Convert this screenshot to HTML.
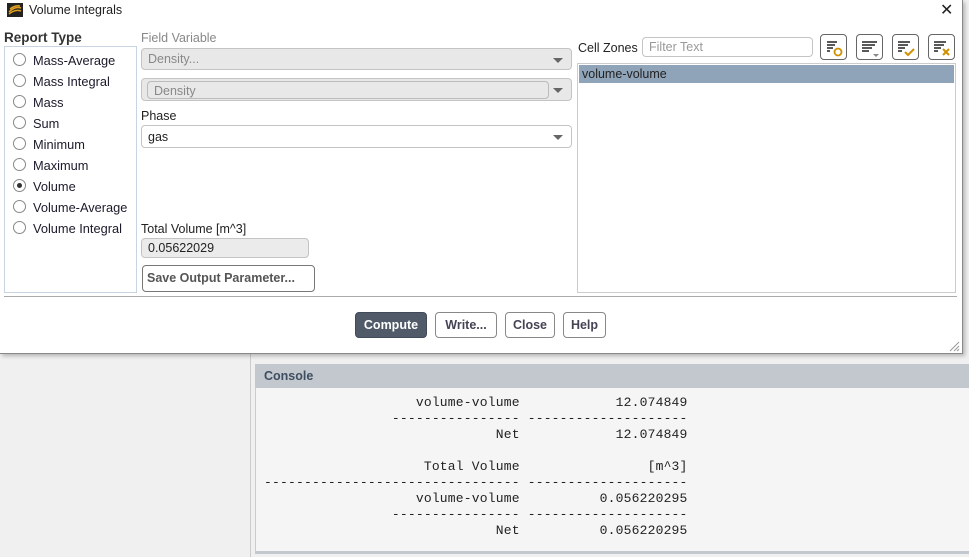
<!DOCTYPE html><html><head><style>
*{margin:0;padding:0;box-sizing:border-box}
body{width:969px;height:557px;position:relative;overflow:hidden;background:#f0f0f0;font-family:"Liberation Sans",sans-serif;font-size:12.5px;color:#222}
.a{position:absolute}
.dlg{left:0;top:0;width:963px;height:354px;background:#fff;border-right:1px solid #888;border-bottom:1px solid #888;box-shadow:2px 2px 4px rgba(0,0,0,.25)}
.radio{position:absolute;left:13px;width:13px;height:13px;border:1px solid #888;border-radius:50%;background:#fff}
.rl{position:absolute;left:33px;font-size:12.8px;color:#1a1a2a}
.combo{position:absolute;border:1px solid #c4c4c4;border-radius:4px;background:#e8e8e8}
.arr{position:absolute;right:8px;top:9px;width:0;height:0;border-left:5px solid transparent;border-right:5px solid transparent;border-top:5px solid #666}
.btn{position:absolute;top:312px;height:26px;border:1px solid #888;border-radius:4px;background:#fff;font-weight:bold;font-size:12.5px;color:#445;text-align:center;line-height:24px;font-family:"Liberation Sans Narrow","Liberation Sans",sans-serif}
.ib{position:absolute;top:34px;width:27px;height:26px;border:1px solid #666;border-radius:4px;background:#fff}
pre{font-family:"Liberation Mono",monospace;font-size:13px;letter-spacing:0.19px;line-height:16px;color:#222}
</style></head><body>
<div class="a" style="left:250px;top:354px;width:1px;height:203px;background:#ccc"></div>
<div class="a" style="left:255px;top:364px;width:714px;height:24px;background:#c3c7ce;color:#3e4e60;font-weight:bold;font-size:12.5px;padding:5px 9px">Console</div>
<div class="a" style="left:255px;top:388px;width:714px;height:166px;background:#f5f5f5;border-left:1px solid #ccc;border-bottom:3px solid #c3c7ce"></div>
<pre class="a" style="left:264px;top:395px">                   volume-volume            12.074849
                ---------------- --------------------
                             Net            12.074849

                    Total Volume                [m^3]
-------------------------------- --------------------
                   volume-volume          0.056220295
                ---------------- --------------------
                             Net          0.056220295</pre>
<div class="a dlg">
<svg class="a" style="left:7px;top:3px" width="16" height="14" viewBox="0 0 16 14"><rect width="16" height="14" fill="#222"/><path d="M2 9 Q8 3 14 5 M2 11 Q8 6 14 8 M3 6 Q8 2 13 3" stroke="#e0a020" stroke-width="1.5" fill="none"/></svg>
<div class="a" style="left:29px;top:3px;font-size:12.5px">Volume Integrals</div>
<div class="a" style="left:940px;top:0px;font-size:16px">✕</div>
<div class="a" style="left:4px;top:30px;font-weight:bold;font-size:13.5px;color:#333">Report Type</div>
<div class="a" style="left:4px;top:46px;width:133px;height:247px;border:1px solid #c8d4e2"></div>
<div class="radio" style="top:53px"></div><div class="rl" style="top:53px">Mass-Average</div>
<div class="radio" style="top:74px"></div><div class="rl" style="top:74px">Mass Integral</div>
<div class="radio" style="top:95px"></div><div class="rl" style="top:95px">Mass</div>
<div class="radio" style="top:116px"></div><div class="rl" style="top:116px">Sum</div>
<div class="radio" style="top:137px"></div><div class="rl" style="top:137px">Minimum</div>
<div class="radio" style="top:158px"></div><div class="rl" style="top:158px">Maximum</div>
<div class="radio" style="top:179px"><div style="position:absolute;left:3px;top:3px;width:5px;height:5px;border-radius:50%;background:#333"></div></div><div class="rl" style="top:179px">Volume</div>
<div class="radio" style="top:200px"></div><div class="rl" style="top:200px">Volume-Average</div>
<div class="radio" style="top:221px"></div><div class="rl" style="top:221px">Volume Integral</div>
<div class="a" style="left:141px;top:31px;color:#888;font-size:12.5px">Field Variable</div>
<div class="combo" style="left:141px;top:48px;width:431px;height:22px;color:#888;padding:3px 6px">Density...<div class="arr"></div></div>
<div class="combo" style="left:141px;top:78px;width:431px;height:23px"><div style="position:absolute;left:5px;top:2px;width:402px;height:18px;border:1px solid #bbb;border-radius:4px;color:#888;padding:2px 6px">Density</div><div class="arr"></div></div>
<div class="a" style="left:141px;top:109px;font-size:12.5px">Phase</div>
<div class="combo" style="left:141px;top:125px;width:431px;height:23px;background:#fff;padding:4px 6px">gas<div class="arr"></div></div>
<div class="a" style="left:141px;top:222px;font-size:12.5px">Total Volume [m^3]</div>
<div class="a" style="left:141px;top:238px;width:168px;height:20px;border:1px solid #c4c4c4;border-radius:4px;background:#ebebeb;padding:2px 6px">0.05622029</div>
<div class="a" style="left:142px;top:265px;width:173px;height:27px;border:1px solid #777;border-radius:4px;font-weight:bold;color:#555;font-size:12.5px;line-height:25px;padding-left:4px;white-space:nowrap">Save Output Parameter...</div>
<div class="a" style="left:578px;top:41px;font-size:12.5px">Cell Zones</div>
<div class="a" style="left:642px;top:37px;width:171px;height:20px;border:1px solid #c4c4c4;border-radius:4px;color:#999;padding:2px 6px">Filter Text</div>
<div class="ib" style="left:820px"><svg width="25" height="24"><path d="M6 7h10M6 10h8M6 13h6M6 16h3" stroke="#222" stroke-width="1.6"/><circle cx="17" cy="17" r="3.5" stroke="#d09000" stroke-width="1.8" fill="none"/></svg></div>
<div class="ib" style="left:856px"><svg width="25" height="24"><path d="M5 7h15M5 10h13M5 13h10M5 16h7" stroke="#222" stroke-width="1.6"/><path d="M16 19l3 3 3-3z" fill="#888"/></svg></div>
<div class="ib" style="left:892px"><svg width="25" height="24"><path d="M5 7h12M5 10h10M5 13h7M5 16h4" stroke="#222" stroke-width="1.6"/><path d="M12 17l3 3 6-6" stroke="#d09000" stroke-width="2" fill="none"/></svg></div>
<div class="ib" style="left:928px"><svg width="25" height="24"><path d="M5 7h12M5 10h10M5 13h7M5 16h4" stroke="#222" stroke-width="1.6"/><path d="M14 14l6 6M20 14l-6 6" stroke="#d09000" stroke-width="2"/></svg></div>
<div class="a" style="left:577px;top:63px;width:379px;height:230px;border:1px solid #ccc"><div style="margin:1px;height:18px;background:#8fa4b8;padding:2px 3px;font-size:12.5px">volume-volume</div></div>
<div class="a" style="left:4px;top:296px;width:953px;height:1px;background:#aaa"></div>
<div class="btn" style="left:355px;width:72px;background:#505a68;color:#fff;border-color:#404a58">Compute</div>
<div class="btn" style="left:435px;width:62px">Write...</div>
<div class="btn" style="left:505px;width:50px">Close</div>
<div class="btn" style="left:563px;width:43px">Help</div>
<svg class="a" style="left:948px;top:340px" width="12" height="12"><path d="M11 2L2 11M11 6L6 11M11 9L9 11" stroke="#999"/></svg>
</div>
</body></html>
